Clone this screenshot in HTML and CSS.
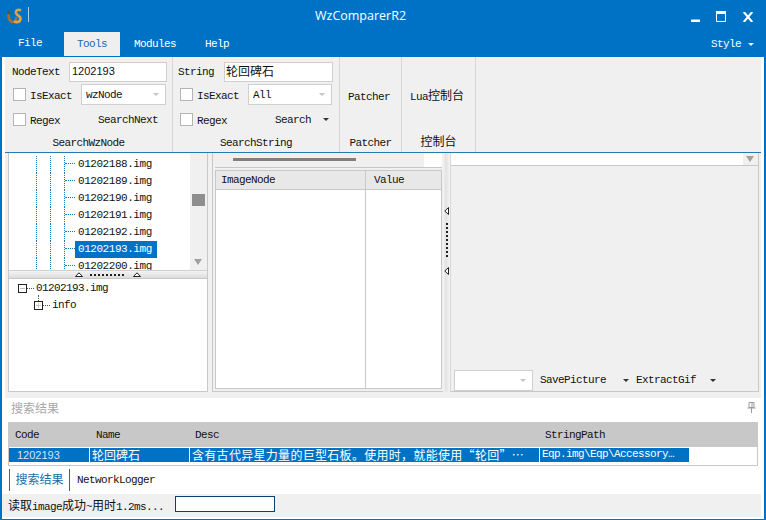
FILE: index.html
```html
<!DOCTYPE html>
<html lang="zh-CN">

<head>
    <meta charset="utf-8">
    <title>WzComparerR2</title>
    <link rel="stylesheet" href="styles.css">
</head>

<body>
    <div class="window">

        <!-- title bar -->
        <header class="titlebar">
            <svg class="logo" width="17" height="16" viewBox="0 0 17 16">
                <path d="M2.5 6c0 5 1.500 8 4.500 8s3.500-3 3-5" fill="none" stroke="#a8702c" stroke-width="2.600" />
                <path d="M15 2.500c-3-1.500-5.500-.5-5 2.500s5 2.500 4.500 6-4 3.500-6.500 2.500" fill="none" stroke="#dca648" stroke-width="2.600" />
                <path d="M1 4l3-1.500 1 3-3 1z" fill="#2f6b3a" />
            </svg>
            <span class="title-sep"></span>
            <span class="title">WzComparerR2</span>
            <div class="winbtns">
                <svg width="9" height="10" viewBox="0 0 9 10"><path d="M0 7.500h9V10H0z" fill="#fff" /></svg>
                <svg class="btn-max" width="10" height="11" viewBox="0 0 10 11"><path d="M.5 1.500h9v9h-9z" fill="none" stroke="#fff" /><path d="M0 0h10v3H0z" fill="#fff" /></svg>
                <svg width="10" height="10" viewBox="0 0 10 10"><path d="M.7 0l8.600 10M9.300 0L.7 10" stroke="#fff" stroke-width="2.200" /></svg>
            </div>
        </header>

        <!-- tabs -->
        <nav class="menubar">
            <a class="menu file">File</a>
            <a class="menu tab-on">Tools</a>
            <a class="menu modules">Modules</a>
            <a class="menu help">Help</a>
            <a class="menu style-menu">Style<i class="caret caret-white"></i></a>
        </nav>

        <div class="content">

            <!-- ribbon -->
            <section class="ribbon">
                <div class="group g-node">
                    <div class="group-body">
                        <div class="line">
                            <label class="lbl-node">NodeText</label>
                            <div class="input in-node"><span class="sans">1202193</span></div>
                        </div>
                        <div class="line">
                            <span class="check"></span><label class="lbl-check">IsExact</label>
                            <div class="combo combo-node">wzNode<i class="caret caret-pale"></i></div>
                        </div>
                        <div class="line">
                            <span class="check"></span><label class="lbl-check lbl-regex">Regex</label>
                            <span class="btn-next">SearchNext</span>
                        </div>
                    </div>
                    <div class="group-name">SearchWzNode</div>
                </div>

                <div class="group g-string">
                    <div class="group-body">
                        <div class="line">
                            <label class="lbl-string">String</label>
                            <div class="input in-string"><span class="cjk">轮回碑石</span></div>
                        </div>
                        <div class="line">
                            <span class="check"></span><label class="lbl-check">IsExact</label>
                            <div class="combo combo-string">All<i class="caret caret-pale"></i></div>
                        </div>
                        <div class="line">
                            <span class="check"></span><label class="lbl-check lbl-regex">Regex</label>
                            <span class="btn-search">Search</span>
                            <i class="caret caret-dark"></i>
                        </div>
                    </div>
                    <div class="group-name">SearchString</div>
                </div>

                <div class="group g-patcher">
                    <div class="group-body center-body">Patcher</div>
                    <div class="group-name">Patcher</div>
                </div>

                <div class="group g-lua">
                    <div class="group-body center-body"><span>Lua<span class="cjk">控制台</span></span></div>
                    <div class="group-name"><span class="cjk">控制台</span></div>
                </div>
            </section>

            <!-- main panes -->
            <section class="main">
                <div class="pane-left">
                    <div class="tree-top">
                        <div class="tree-rows">
                            <div class="tree-row"><i class="guide"></i><i class="guide"></i><i class="guide last"></i><i class="branch"></i><span>01202188.img</span></div>
                            <div class="tree-row"><i class="guide"></i><i class="guide"></i><i class="guide last"></i><i class="branch"></i><span>01202189.img</span></div>
                            <div class="tree-row"><i class="guide"></i><i class="guide"></i><i class="guide last"></i><i class="branch"></i><span>01202190.img</span></div>
                            <div class="tree-row"><i class="guide"></i><i class="guide"></i><i class="guide last"></i><i class="branch"></i><span>01202191.img</span></div>
                            <div class="tree-row"><i class="guide"></i><i class="guide"></i><i class="guide last"></i><i class="branch"></i><span>01202192.img</span></div>
                            <div class="tree-row"><i class="guide"></i><i class="guide"></i><i class="guide last"></i><i class="branch"></i><span class="valgt">01202193.img</span></div>
                            <div class="tree-row"><i class="guide"></i><i class="guide"></i><i class="guide last"></i><i class="branch"></i><span>01202200.img</span></div>
                        </div>
                        <div class="vscroll">
                            <span class="vthumb"></span>
                            <i class="caret caret-scroll"></i>
                        </div>
                    </div>
                    <div class="split-h">
                        <svg width="8" height="5" viewBox="0 0 8 5"><path d="M.5 4.500L4 .8l3.500 3.700z" fill="#fff" stroke="#222" /></svg>
                        <span class="dots-h"></span>
                        <svg class="tri-second" width="8" height="5" viewBox="0 0 8 5"><path d="M.5 4.500L4 .8l3.500 3.700z" fill="#fff" stroke="#222" /></svg>
                    </div>
                    <div class="tree-bottom">
                        <div class="node-row"><i class="box"></i><i class="stub"></i><span>01202193.img</span></div>
                        <div class="node-row node-child"><i class="box box-plus"></i><i class="stub"></i><span>info</span></div>
                    </div>
                </div>

                <div class="pane-mid">
                    <div class="hscroll">
                        <div class="hscroll-track"><span class="hthumb"></span></div>
                    </div>
                    <div class="grid">
                        <div class="grid-head">
                            <span class="col-node">ImageNode</span>
                            <span class="col-value">Value</span>
                        </div>
                        <div class="grid-body">
                            <span class="col-node"></span>
                            <span class="col-value"></span>
                        </div>
                    </div>
                </div>

                <div class="split-v">
                    <svg width="5" height="8" viewBox="0 0 5 8"><path d="M4.500.5L.8 4l3.700 3.500z" fill="#fff" stroke="#222" /></svg>
                    <span class="dots-v"></span>
                    <svg width="5" height="8" viewBox="0 0 5 8"><path d="M4.500.5L.8 4l3.700 3.500z" fill="#fff" stroke="#222" /></svg>
                </div>

                <div class="pane-right">
                    <div class="pic-combo"><span class="pic-arrow"><i class="caret caret-scroll"></i></span></div>
                    <div class="pic-area"></div>
                    <div class="pic-bar">
                        <div class="combo combo-pic"><i class="caret caret-pale"></i></div>
                        <span class="bar-save">SavePicture</span>
                        <i class="caret caret-dark"></i>
                        <span class="bar-gif">ExtractGif</span>
                        <i class="caret caret-dark"></i>
                    </div>
                </div>
            </section>

            <!-- search results -->
            <section class="results">
                <div class="results-cap">
                    <span class="cjk cap-text">搜索结果</span>
                    <svg class="pin" width="9" height="11" viewBox="0 0 9 11">
                        <path d="M2 .5h5v5H2zM5 .5v5M.5 6h8M4.500 6v5" fill="none" stroke="#9a9a9a" />
                    </svg>
                </div>
                <div class="rtable">
                    <div class="rhead">
                        <span class="c-code">Code</span>
                        <span class="c-name">Name</span>
                        <span class="c-desc">Desc</span>
                        <span class="c-path">StringPath</span>
                    </div>
                    <div class="rrow">
                        <span class="c-code sans">1202193</span>
                        <span class="c-name cjk">轮回碑石</span>
                        <span class="c-desc cjk">含有古代异星力量的巨型石板。使用时，就能使用“轮回”…</span>
                        <span class="c-path">Eqp.img\Eqp\Accessory…</span>
                    </div>
                </div>
                <div class="dock-tabs">
                    <span class="dock-on cjk">搜索结果</span>
                    <span class="dock-off">NetworkLogger</span>
                </div>
            </section>

            <!-- status bar -->
            <footer class="status">
                <span class="status-text"><span class="cjk">读取</span>image<span class="cjk">成功</span>~<span class="cjk">用时</span>1.2ms...</span>
                <span class="progress"></span>
            </footer>
        </div>
    </div>
</body>

</html>
```

FILE: styles.css
```css
body {
    margin: 0;
    font-family: "Liberation Mono", "Noto Sans CJK SC", monospace;
    font-size: 11px;
    letter-spacing: -0.6px;
    color: #111;
}

i {
    display: block;
    flex: none;
}

.cjk {
    font-family: "Noto Sans CJK SC", sans-serif;
    font-size: 12px;
    letter-spacing: 0;
    text-spacing-trim: space-all;
}

.sans {
    font-family: "Liberation Sans", sans-serif;
    letter-spacing: 0;
}

.window {
    width: 766px;
    height: 520px;
    background-color: #0072c6;
    display: flex;
    flex-direction: column;
    overflow: hidden;
}

/* title bar */

.titlebar {
    height: 32px;
    display: flex;
    align-items: center;
    color: #fff;
    position: relative;
}

.logo {
    margin-left: 6px;
}

.title-sep {
    width: 1px;
    height: 15px;
    margin-left: 5px;
    margin-bottom: 4px;
    background-color: #a9cfea;
}

.title {
    position: absolute;
    left: 315px;
    top: 7px;
    font-family: "Open Sans", sans-serif;
    font-size: 12.5px;
    letter-spacing: 0;
}

.winbtns {
    margin-left: auto;
    display: flex;
    align-items: center;
    gap: 16px;
    margin-right: 13px;
    margin-top: 1px;
}

.btn-max {
    margin-right: 1px;
}

/* tabs */

.menubar {
    height: 25px;
    display: flex;
    color: #fff;
}

.menu {
    height: 24px;
    line-height: 24px;
}

.file {
    margin-left: 18px;
    margin-right: 16px;
    width: 30px;
    line-height: 22px;
}

.tab-on {
    width: 56px;
    text-align: center;
    background-color: #efefef;
    color: #1a6da8;
}

.modules {
    margin-left: 14px;
}

.help {
    margin-left: 29px;
}

.style-menu {
    margin-left: auto;
    margin-right: 12px;
    display: flex;
    align-items: center;
    gap: 7px;
}

.caret {
    width: 0;
    height: 0;
    border-left: 4px solid transparent;
    border-right: 4px solid transparent;
    border-top: 4px solid #fff;
}

.caret-white {
    border-left-width: 3px;
    border-right-width: 3px;
    border-top: 3px solid #e8f2fa;
}

.caret-pale {
    margin-left: auto;
    border-left-width: 3px;
    border-right-width: 3px;
    border-top: 3px solid #c4c4c4;
}

.caret-dark {
    border-left-width: 3px;
    border-right-width: 3px;
    border-top: 3px solid #333;
}

.caret-scroll {
    border-top: 6px solid #a0a0a0;
}

/* white frame round everything below the tabs */

.content {
    flex: 1;
    margin: 0 2px 1px;
    padding: 0 3px 2px;
    background-color: #fff;
    display: flex;
    flex-direction: column;
}

/* ribbon */

.ribbon {
    height: 95px;
    flex: none;
    background-color: #f0f0f0;
    border-bottom: 1px solid #2a78b0;
    display: flex;
}

.group {
    border-right: 1px solid #d6d6d6;
    display: flex;
    flex-direction: column;
    box-sizing: border-box;
}

.g-node {
    width: 168px;
}

.g-string {
    width: 167px;
}

.g-patcher {
    width: 62px;
}

.g-lua {
    width: 74px;
}

.group-body {
    height: 77px;
    padding: 4px 0 0;
    box-sizing: border-box;
}

.center-body {
    display: flex;
    align-items: center;
    justify-content: center;
    padding: 0 3px 0 0;
}

.g-patcher .center-body {
    padding-top: 2px;
}

.group-name {
    text-align: center;
    line-height: 18px;
}

.line {
    display: flex;
    align-items: center;
    height: 21px;
    margin-bottom: 4px;
    padding-left: 8px;
}

.line:first-child {
    margin-bottom: 2px;
}

.input {
    height: 20px;
    box-sizing: border-box;
    background-color: #fff;
    border: 1px solid #cfcfcf;
    line-height: 17px;
    padding-left: 2px;
}

.lbl-node {
    width: 56px;
    margin-left: -1px;
}

.in-node {
    width: 98px;
    margin-left: 1px;
}

.lbl-string {
    width: 46px;
    margin-left: -2px;
}

.in-string {
    width: 109px;
    padding-left: 1px;
    line-height: 16px;
}

.check {
    width: 13px;
    height: 13px;
    flex: none;
    background-color: #fff;
    border: 1px solid #b4b4b4;
    box-sizing: border-box;
}

.lbl-check {
    margin-left: 4px;
    padding-top: 2px;
    width: 47px;
}

.lbl-regex {
    width: 30px;
}

.combo {
    height: 21px;
    box-sizing: border-box;
    background-color: #fff;
    border: 1px solid #cfcfcf;
    padding: 0 6px 0 4px;
    display: flex;
    align-items: center;
}

.combo-node {
    width: 85px;
    margin-left: 4px;
}

.combo-string {
    width: 84px;
    margin-left: 4px;
}

.btn-next {
    margin-left: 38px;
}

.btn-search {
    margin-left: 48px;
    margin-right: 12px;
}

.g-string .line {
    padding-left: 7px;
}

/* main panes */

.main {
    height: 245px;
    flex: none;
    padding: 0 3px;
    background-color: #f0f0f0;
    display: flex;
}

.pane-left {
    width: 200px;
    height: 239px;
    display: flex;
    flex-direction: column;
    box-sizing: border-box;
    border-left: 1px solid #c8c8c8;
    border-right: 1px solid #c8c8c8;
    border-bottom: 1px solid #c8c8c8;
    flex: none;
    background-color: #fff;
}

.tree-top {
    height: 117px;
    flex: none;
    display: flex;
    overflow: hidden;
}

.tree-rows {
    flex: 1;
    padding-top: 3px;
}

.tree-row {
    height: 17px;
    display: flex;
    align-items: stretch;
    padding-left: 27px;
    line-height: 17px;
}

.guide {
    width: 14px;
    box-sizing: border-box;
    border-left: 1px dotted #1a78b8;
}

.guide.last {
    width: 1px;
}

.branch {
    width: 10px;
    height: 8px;
    box-sizing: border-box;
    border-bottom: 1px dotted #1a78b8;
}

.tree-row span {
    padding: 0 5px 0 3px;
    letter-spacing: -0.45px;
}

.tree-row .valgt {
    background-color: #0072c6;
    color: #fff;
}

.vscroll {
    width: 17px;
    background-color: #f0f0f0;
    position: relative;
}

.vthumb {
    position: absolute;
    left: 2px;
    top: 41px;
    width: 13px;
    height: 12px;
    background-color: #8e8e8e;
}

.vscroll .caret-scroll {
    position: absolute;
    left: 4px;
    top: 106px;
}

.split-h {
    height: 7px;
    flex: none;
    background: linear-gradient(#f4f4f4, #dcdcdc);
    display: flex;
    align-items: center;
    gap: 7px;
    border-top: 1px solid #d0d0d0;
    border-bottom: 1px solid #c8c8c8;
    padding-left: 66px;
}

.tri-second {
    margin-left: 2px;
}

.dots-h {
    width: 34px;
    height: 2px;
    background: repeating-linear-gradient(90deg, #222 0 2px, transparent 2px 4px);
}

.tree-bottom {
    flex: 1;
    padding: 1px 0 0 9px;
}

.node-row {
    display: flex;
    align-items: center;
    height: 17px;
    line-height: 17px;
}

.node-child {
    padding-left: 16px;
}

.box {
    width: 9px;
    height: 9px;
    box-sizing: border-box;
    border: 1px solid #222;
    background: linear-gradient(#bbb, #bbb) center / 5px 1px no-repeat;
    position: relative;
}

.box-plus {
    background: linear-gradient(#ccc, #ccc) center / 5px 1px no-repeat, linear-gradient(#ccc, #ccc) center / 1px 5px no-repeat;
}

.box-plus::before {
    content: "";
    position: absolute;
    left: 3px;
    top: -7px;
    height: 6px;
    border-left: 1px dotted #555;
}

.stub {
    width: 7px;
    margin-right: 2px;
    border-top: 1px dotted #555;
}

.pane-mid {
    width: 231px;
    height: 239px;
    box-sizing: border-box;
    margin-left: 4px;
    padding: 0 1px 2px 2px;
    border-left: 1px solid #c8c8c8;
    border-bottom: 1px solid #c8c8c8;
    flex: none;
    display: flex;
    flex-direction: column;
}

.hscroll {
    height: 15px;
    flex: none;
    background-color: #fff;
    border-bottom: 1px solid #c8c8c8;
    box-sizing: border-box;
}

.hscroll-track {
    width: 209px;
    height: 14px;
    background-color: #f0f0f0;
    padding-top: 5px;
    box-sizing: border-box;
}

.hthumb {
    display: block;
    width: 123px;
    height: 3px;
    margin-left: 18px;
    background-color: #808080;
}

.grid {
    flex: 1;
    margin-top: 2px;
    background-color: #fff;
    border: 1px solid #c8c8c8;
    display: flex;
    flex-direction: column;
}

.grid-head {
    height: 18px;
    flex: none;
    display: flex;
    background-color: #e8e8e8;
    border-bottom: 1px solid #c8c8c8;
    line-height: 19px;
}

.grid-body {
    flex: 1;
    display: flex;
}

.col-node {
    width: 150px;
    box-sizing: border-box;
    padding-left: 5px;
    border-right: 1px solid #c8c8c8;
}

.col-value {
    padding-left: 8px;
}

.split-v {
    width: 7px;
    height: 239px;
    flex: none;
    display: flex;
    flex-direction: column;
    align-items: center;
    padding-top: 54px;
    box-sizing: border-box;
    gap: 8px;
    background: linear-gradient(90deg, #f4f4f4, #e2e2e2 40%, #f4f4f4);
}

.dots-v {
    width: 2px;
    height: 36px;
    background: repeating-linear-gradient(#222 0 2px, transparent 2px 4px);
}

.pane-right {
    width: 309px;
    height: 239px;
    box-sizing: border-box;
    border-left: 1px solid #d8d8d8;
    border-right: 1px solid #c8c8c8;
    border-bottom: 1px solid #c8c8c8;
    display: flex;
    flex-direction: column;
    flex: none;
}

.pic-combo {
    height: 12px;
    flex: none;
    background-color: #fff;
    border-bottom: 1px solid #c8c8c8;
    display: flex;
    justify-content: flex-end;
}

.pic-arrow {
    width: 15px;
    background-color: #f0f0f0;
    padding: 3px 0 0 3px;
    box-sizing: border-box;
}

.pic-area {
    flex: 1;
}

.pic-bar {
    height: 20px;
    flex: none;
    margin-bottom: 1px;
    padding-left: 3px;
    display: flex;
    align-items: center;
}

.combo-pic {
    width: 79px;
}

.bar-save {
    margin-left: 7px;
    margin-right: 17px;
}

.bar-gif {
    margin-left: 7px;
    margin-right: 14px;
}

/* search results */

.results {
    height: 96px;
    flex: none;
    padding: 0 0 0 3px;
    display: flex;
    flex-direction: column;
}

.results-cap {
    height: 24px;
    flex: none;
    display: flex;
    align-items: center;
    padding: 0 5px 5px 3px;
    box-sizing: border-box;
}

.cap-text {
    color: #a8a8a8;
}

.pin {
    margin-left: auto;
}

.rtable {
    width: 750px;
    height: 44px;
    flex: none;
    border: 1px solid #c8c8c8;
    border-top: 0;
    box-sizing: border-box;
}

.rhead {
    height: 25px;
    background-color: #c8c8c8;
    display: flex;
    line-height: 26px;
}

.rrow {
    height: 14px;
    margin-top: 1px;
    display: flex;
    color: #fff;
    line-height: 14px;
    width: 680px;
}

.rrow span {
    background-color: #0072c6;
    white-space: nowrap;
    border-right: 1px solid #fff;
}

.rrow .c-code {
    color: #d4e6f4;
    padding-left: 8px;
}

.rrow .c-name {
    padding-left: 2px;
}

.rrow .c-desc {
    padding-left: 2px;
    letter-spacing: 0.3px;
}

.rrow .c-path {
    padding-left: 2px;
    border-right: 0;
    line-height: 13px;
}

.c-code {
    width: 81px;
    box-sizing: border-box;
    padding-left: 6px;
}

.c-name {
    width: 100px;
    box-sizing: border-box;
    padding-left: 6px;
}

.c-desc {
    width: 350px;
    box-sizing: border-box;
    padding-left: 5px;
}

.c-path {
    width: 149px;
    box-sizing: border-box;
    padding-left: 5px;
}

.dock-tabs {
    height: 22px;
    margin-top: 3px;
    flex: none;
    display: flex;
    align-items: center;
    padding-left: 1px;
}

.dock-on {
    width: 59px;
    height: 22px;
    line-height: 20px;
    text-align: center;
    color: #1a6da8;
    border-left: 1px solid #1a6da8;
    border-right: 1px solid #1a6da8;
}

.dock-off {
    margin-left: 7px;
}

/* status bar */

.status {
    flex: 1;
    margin-left: -3px;
    padding: 0 0 3px 6px;
    background-color: #f0f0f0;
    display: flex;
    align-items: center;
}

.status-text {
    width: 167px;
    flex: none;
    white-space: nowrap;
}

.progress {
    width: 100px;
    height: 16px;
    box-sizing: border-box;
    background-color: #fff;
    border: 1px solid #0f3f6e;
}
```
